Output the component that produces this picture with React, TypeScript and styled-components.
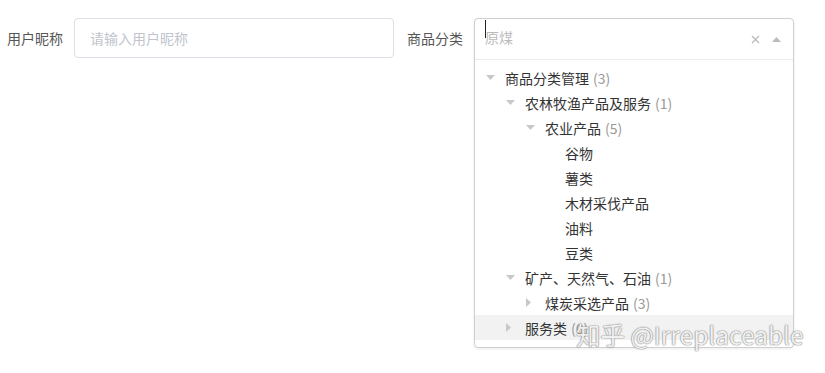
import React from "react";
import styled, { createGlobalStyle } from "styled-components";

const GlobalStyle = createGlobalStyle`
  html, body {
    margin: 0;
    padding: 0;
    background: #fff;
    font-family: "Noto Sans CJK SC", "Noto Sans", sans-serif;
    font-size: 14px;
  }
`;

const Page = styled.div`
  position: relative;
  width: 825px;
  height: 373px;
  overflow: hidden;
  padding: 18px 0 0 7px;
  box-sizing: border-box;
`;

const Form = styled.div`
  display: flex;
  align-items: flex-start;
  gap: 13px;
`;

const Field = styled.div`
  display: flex;
  align-items: flex-start;
`;

const Label = styled.label`
  width: 67px;
  line-height: 40px;
  color: #555;
  font-size: 14px;
  white-space: nowrap;
`;

const Input = styled.div`
  width: 320px;
  height: 40px;
  box-sizing: border-box;
  border: 1px solid #dcdfe6;
  border-radius: 4px;
  padding: 0 15px;
  line-height: 38px;
  color: #c0c4cc;
  font-size: 14px;
`;

const Select = styled.div`
  width: 320px;
  box-sizing: border-box;
  border: 1px solid #cfcfcf;
  border-radius: 4px;
  background: #fff;
  box-shadow: 0 1px 3px rgba(0, 0, 0, 0.08);
`;

const SelectHead = styled.div`
  position: relative;
  display: flex;
  align-items: center;
  height: 40px;
  padding: 0 10px;
  border-bottom: 1px solid #ececec;
`;

const Placeholder = styled.span`
  flex: 1;
  color: #bbb;
  font-size: 14px;
  padding-bottom: 4px;
`;

const Caret = styled.span`
  position: absolute;
  left: 10px;
  top: 1px;
  width: 1px;
  height: 18px;
  background: #222;
`;

const HeadIcons = styled.div`
  display: flex;
  align-items: center;
  gap: 12px;
  margin-right: 2px;
`;

const Tree = styled.ul`
  list-style: none;
  margin: 0;
  padding: 5px 0 7px;
`;

const Row = styled.li<{ $level: number; $hover?: boolean }>`
  display: flex;
  align-items: center;
  height: 25px;
  padding-left: ${({ $level }) => 10 + $level * 20}px;
  background: ${({ $hover }) => ($hover ? "#f2f2f2" : "transparent")};
  color: #333;
  font-size: 14px;
  white-space: nowrap;
`;

const Toggle = styled.span`
  display: inline-flex;
  align-items: center;
  justify-content: flex-start;
  width: 19px;
  height: 25px;
  padding-left: 1px;
`;

const Count = styled.span`
  color: #999;
  margin-left: 4px;
`;

const Watermark = styled.div`
  position: absolute;
  left: 576px;
  top: 317px;
  font-family: "Noto Sans CJK SC", "Noto Sans", sans-serif;
  font-size: 24.5px;
  color: rgba(255, 255, 255, 0.88);
  text-shadow: 0 0 1px #888, 0 0 1px #888, 0 0 2px rgba(0, 0, 0, 0.25);
  white-space: nowrap;
`;

const Down = () => (
  <svg width="9" height="5" viewBox="0 0 9 5">
    <path d="M0 0 L9 0 L4.5 5 Z" fill="#c8c8c8" />
  </svg>
);

const Right = () => (
  <svg width="5" height="9" viewBox="0 0 5 9">
    <path d="M0 0 L5 4.5 L0 9 Z" fill="#c8c8c8" />
  </svg>
);

type Node = {
  label: string;
  level: number;
  count?: number;
  state?: "open" | "closed";
  hover?: boolean;
};

const nodes: Node[] = [
  { label: "商品分类管理", level: 0, count: 3, state: "open" },
  { label: "农林牧渔产品及服务", level: 1, count: 1, state: "open" },
  { label: "农业产品", level: 2, count: 5, state: "open" },
  { label: "谷物", level: 3 },
  { label: "薯类", level: 3 },
  { label: "木材采伐产品", level: 3 },
  { label: "油料", level: 3 },
  { label: "豆类", level: 3 },
  { label: "矿产、天然气、石油", level: 1, count: 1, state: "open" },
  { label: "煤炭采选产品", level: 2, count: 3, state: "closed" },
  { label: "服务类", level: 1, count: 0, state: "closed", hover: true },
];

export default function App() {
  return (
    <Page>
      <GlobalStyle />
      <Form>
        <Field>
          <Label>用户昵称</Label>
          <Input>请输入用户昵称</Input>
        </Field>
        <Field>
          <Label>商品分类</Label>
          <Select>
            <SelectHead>
              <Caret />
              <Placeholder>原煤</Placeholder>
              <HeadIcons>
                <svg width="9" height="9" viewBox="0 0 9 9">
                  <path d="M1 1 L8 8 M8 1 L1 8" stroke="#bbb" strokeWidth="1.4" />
                </svg>
                <svg width="9" height="5" viewBox="0 0 9 5">
                  <path d="M0 5 L4.5 0 L9 5 Z" fill="#bbb" />
                </svg>
              </HeadIcons>
            </SelectHead>
            <Tree>
              {nodes.map((n) => (
                <Row key={n.label} $level={n.level} $hover={n.hover}>
                  <Toggle>
                    {n.state === "open" && <Down />}
                    {n.state === "closed" && <Right />}
                  </Toggle>
                  <span>{n.label}</span>
                  {n.count !== undefined && <Count>({n.count})</Count>}
                </Row>
              ))}
            </Tree>
          </Select>
        </Field>
      </Form>
      <Watermark>知乎 @Irreplaceable</Watermark>
    </Page>
  );
}
